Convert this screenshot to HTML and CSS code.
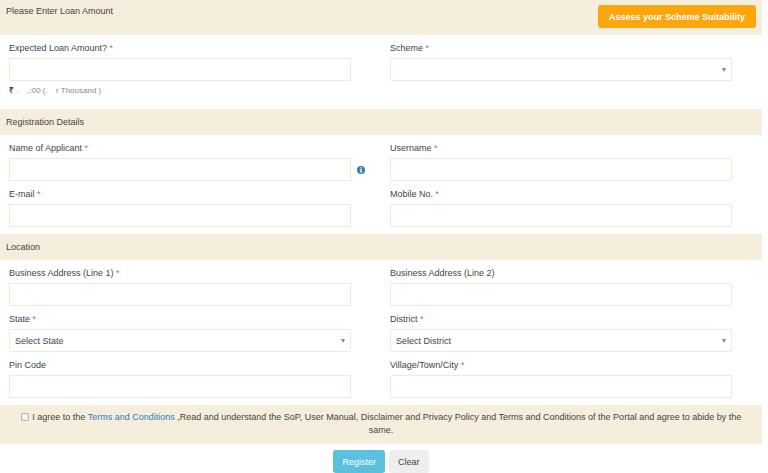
FILE: index.html
```
<!DOCTYPE html>
<html lang="en">
<head>
  <meta charset="UTF-8" />
  <meta name="viewport" content="width=device-width, initial-scale=1.0" />
  <title>Loan Application</title>
  <link rel="stylesheet" href="styles.css">
</head>
<body>
  <form class="loan-form">
    <div class="bar bar-top">
      <h2>Please Enter Loan Amount</h2>
      <button type="button" class="btn btn-warning">Assess your Scheme Suitability</button>
    </div>
    <div class="fields fields-amount">
      <div class="field">
        <label for="amount">Expected Loan Amount? <span class="req">*</span></label>
        <input type="text" id="amount" class="control">
        <p class="hint"><b>₹</b> <span class="gap">.</span>,:00 <span class="gap">(.</span> r Thousand )</p>
      </div>
      <div class="field">
        <label for="scheme">Scheme <span class="req">*</span></label>
        <div class="select-wrap">
          <select id="scheme" class="control"><option></option></select>
        </div>
      </div>
    </div>

    <div class="bar"><h2>Registration Details</h2></div>
    <div class="fields">
      <div class="field">
        <label for="name">Name of Applicant <span class="req">*</span></label>
        <div class="with-info">
          <input type="text" id="name" class="control">
          <svg class="info" viewBox="0 0 16 16" aria-hidden="true">
            <circle cx="8" cy="8" r="8" fill="#337ab7"/>
            <path d="M6.7 2.6h2.8v2.2H6.7zM5.6 6.3h3.9v5h1.2v1.7H5.6v-1.7h1.2V8H5.6z" fill="#fff"/>
          </svg>
        </div>
      </div>
      <div class="field">
        <label for="username">Username <span class="req">*</span></label>
        <input type="text" id="username" class="control">
      </div>
      <div class="field">
        <label for="email">E-mail <span class="req">*</span></label>
        <input type="text" id="email" class="control">
      </div>
      <div class="field">
        <label for="mobile">Mobile No. <span class="req">*</span></label>
        <input type="text" id="mobile" class="control">
      </div>
    </div>

    <div class="bar"><h2>Location</h2></div>
    <div class="fields">
      <div class="field">
        <label for="address1">Business Address (Line 1) <span class="req">*</span></label>
        <input type="text" id="address1" class="control">
      </div>
      <div class="field">
        <label for="address2">Business Address (Line 2)</label>
        <input type="text" id="address2" class="control">
      </div>
      <div class="field">
        <label for="state">State <span class="req">*</span></label>
        <div class="select-wrap">
          <select id="state" class="control"><option>Select State</option></select>
        </div>
      </div>
      <div class="field">
        <label for="district">District <span class="req">*</span></label>
        <div class="select-wrap">
          <select id="district" class="control"><option>Select District</option></select>
        </div>
      </div>
      <div class="field">
        <label for="pin">Pin Code</label>
        <input type="text" id="pin" class="control">
      </div>
      <div class="field">
        <label for="city">Village/Town/City <span class="req">*</span></label>
        <input type="text" id="city" class="control">
      </div>
    </div>

    <div class="terms">
      <input type="checkbox" id="agree">
      <label for="agree">I agree to the <a href="#">Terms and Conditions</a> ,Read and understand the SoP, User Manual, Disclaimer and Privacy Policy and Terms and Conditions of the Portal and agree to abide by the same.</label>
    </div>

    <div class="actions">
      <button type="submit" class="btn btn-info">Register</button>
      <button type="reset" class="btn btn-default">Clear</button>
    </div>
  </form>
</body>
</html>
```
FILE: styles.css
```
* {
  box-sizing: border-box;
}
body {
  margin: 0;
  background-color: #fff;
  color: #444;
  font-family: "Liberation Sans", Arial, sans-serif;
  font-size: 9px;
  line-height: 13px;
}
.loan-form {
  margin-right: 6px;
}
.bar {
  display: flex;
  align-items: center;
  justify-content: space-between;
  height: 26px;
  padding: 0 6px;
  background-color: #f5eedc;
}
.bar-top {
  align-items: flex-start;
  height: 35px;
  padding-top: 5px;
}
.bar h2 {
  margin: 0;
  font-size: 9px;
  font-weight: normal;
}
.fields {
  display: grid;
  grid-template-columns: 1fr 1fr;
  row-gap: 3px;
  padding: 3px 0 7px;
}
.fields-amount {
  padding-bottom: 12px;
}
.field {
  padding: 0 30px 0 9px;
}
.field label {
  display: block;
  line-height: 20px;
}
.req {
  color: #e2574c;
}
.control {
  display: block;
  width: 100%;
  height: 23px;
  padding: 0 5px;
  border: 1px solid #f1ebd3;
  border-radius: 1px;
  background-color: #fff;
  color: #444;
  font-family: inherit;
  font-size: 9px;
}
select.control {
  appearance: none;
}
.select-wrap {
  position: relative;
}
.select-wrap::after {
  content: "";
  position: absolute;
  top: 10px;
  right: 6px;
  border: 2px solid transparent;
  border-top: 4px solid #888;
  border-bottom: 0;
  pointer-events: none;
}
.hint {
  margin: 3px 0 0;
  color: #888;
  font-size: 8px;
}
.hint b {
  color: #444;
}
.gap {
  display: inline-block;
  width: 11px;
}
.with-info {
  position: relative;
}
.info {
  position: absolute;
  top: 8px;
  right: -14px;
  width: 8px;
  height: 8px;
}
.terms {
  padding: 6px 9px 7px;
  background-color: #f5eedc;
  text-align: center;
}
.terms input {
  appearance: none;
  width: 8px;
  height: 8px;
  margin: 0 1px 0 0;
  border: 1px solid #b5b5ae;
  border-radius: 1px;
  background-color: #f3f1ea;
  vertical-align: -1px;
}
.terms a {
  color: #337ab7;
  text-decoration: none;
}
.actions {
  display: flex;
  justify-content: center;
  gap: 4px;
  padding-top: 6px;
}
.btn {
  height: 23px;
  padding: 0 9px;
  border: 0;
  border-radius: 3px;
  font-family: inherit;
  font-size: 9px;
}
.btn-warning {
  padding: 0 11px;
  background-color: #fba60d;
  color: #fff;
  font-weight: bold;
}
.btn-info {
  background-color: #5bc0de;
  color: #fff;
}
.btn-default {
  background-color: #eee;
  color: #444;
}
```
